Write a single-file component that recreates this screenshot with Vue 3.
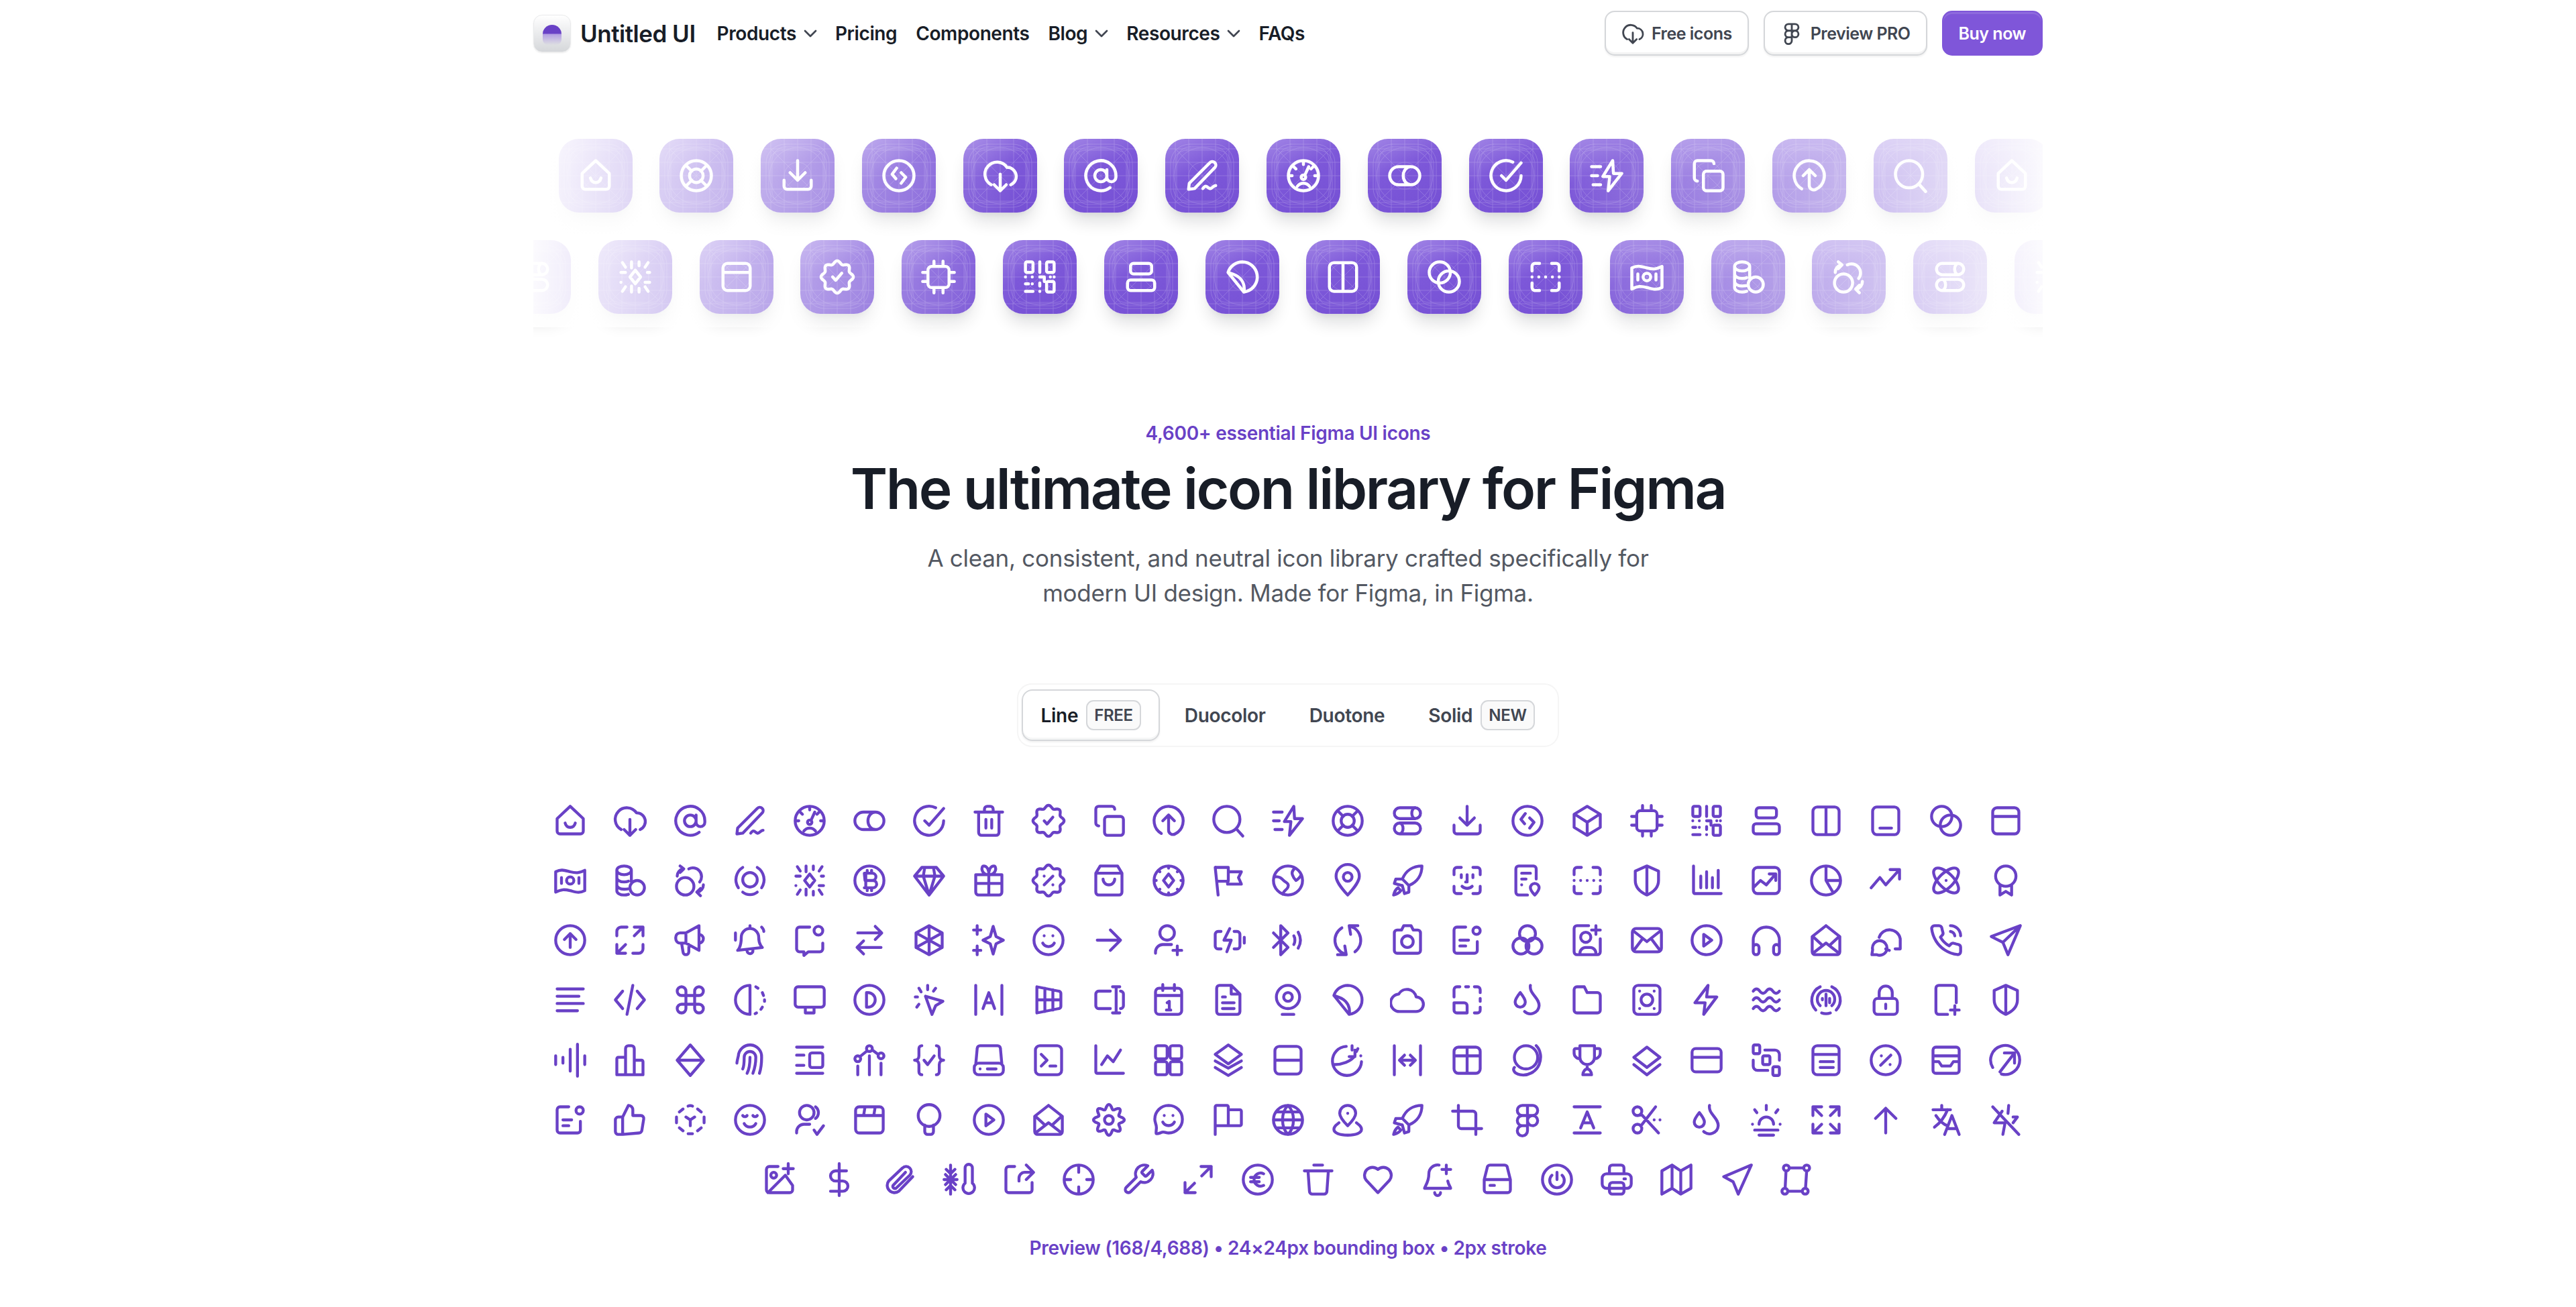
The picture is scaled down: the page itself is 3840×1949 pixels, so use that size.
<script setup>
const c = (x, y, r) => `M${x - r} ${y}a${r} ${r} 0 1 0 ${2 * r} 0a${r} ${r} 0 1 0 ${-2 * r} 0Z`
const rr = (x, y, w, h, r) =>
  `M${x + r} ${y}h${w - 2 * r}a${r} ${r} 0 0 1 ${r} ${r}v${h - 2 * r}a${r} ${r} 0 0 1 ${-r} ${r}h${-(w - 2 * r)}a${r} ${r} 0 0 1 ${-r} ${-r}v${-(h - 2 * r)}a${r} ${r} 0 0 1 ${r} ${-r}Z`
// scalloped outline for the badge and gear icons
const wavy = (R, amp, n) => {
  let d = ''
  for (let i = 0; i < 96; i++) {
    const t = (i / 96) * Math.PI * 2
    const r = R + amp * Math.cos(n * t)
    d += `${i ? 'L' : 'M'}${(12 + r * Math.sin(t)).toFixed(2)} ${(12 - r * Math.cos(t)).toFixed(2)}`
  }
  return d + 'Z'
}
const corners = 'M3 8V5a2 2 0 0 1 2-2h3M16 3h3a2 2 0 0 1 2 2v3M3 16v3a2 2 0 0 0 2 2h3M16 21h3a2 2 0 0 0 2-2v-3'

const i = {
  home: 'M3 10.5 12 2l9 8.5V19a2 2 0 0 1-2 2H5a2 2 0 0 1-2-2ZM8.5 13.5c.5 2 1.8 3 3.5 3s3-1 3.5-3',
  cloudDown: 'M6 18A8 8 0 1 1 16.500 6.500 6 6 0 0 1 19 18M12 11v11M8 18l4 4 4-4',
  at: 'M16 12a4 4 0 1 1-8 0 4 4 0 0 1 8 0ZM16 8v5a3 3 0 0 0 6 0v-1a10 10 0 1 0-3.9 7.9',
  signature: 'M3 21l.5-4L17 3.5a2.1 2.1 0 0 1 3.5 3L7 20.5ZM12.5 20.5c1-1.5 2-2 3-1s2 1.5 3 .5 1.700-1.500 2.500-1.500',
  speedo: c(12, 12, 10) + c(12, 13, 1.5) + 'M13 11.500 15.500 6M2.500 12h2M19.500 12h2M5.500 6 7 7.500M18.500 6 17 7.500M12 2v2.500M8 19c1-1.300 2.400-2 4-2s3 .7 4 2',
  toggle: rr(2, 6, 20, 12, 6) + 'M16 6a5 6 0 0 0 0 12',
  checkCircle: 'M16.500 3A10 10 0 1 0 22 12M22 3.500 12 15l-3-3',
  trash: 'M2.500 6h19M9 6V4a2 2 0 0 1 2-2h2a2 2 0 0 1 2 2v2M5 6v14a2 2 0 0 0 2 2h10a2 2 0 0 0 2-2V6M10 11v6M14 11v6',
  badge: wavy(9.7, 1, 8) + 'M9 12l2 2.200 4-4.700',
  copy: 'M5 15.500a2 2 0 0 1-2-2V4a2 2 0 0 1 2-2h9a2 2 0 0 1 2 2' + rr(9, 9, 13, 13, 2),
  upOpen: 'M7 20.700a10 10 0 1 1 9.500.3 3 3 0 0 1-4.500-2.500V8M8 12l4-4 4 4',
  search: c(11, 11, 9) + 'M22 22.500l-4.500-5',
  zapFast: 'M2 6h6M2 12h4M3 18h5M16 2 9.500 12.500H14L13 22l9-11.500h-5.500Z',
  lifebuoy: c(12, 12, 10) + c(12, 12, 4.5) + 'M5 5l4 4M15 9l4-4M15 15l4 4M9 15l-4 4',
  toggles: rr(3, 3, 18, 7.5, 3.75) + 'M17.500 3a2.500 3.750 0 0 0 0 7.500' + rr(3, 13.5, 18, 7.5, 3.75) + 'M6.500 13.500a2.500 3.750 0 0 1 0 7.500',
  download: 'M21 15v4a2 2 0 0 1-2 2H5a2 2 0 0 1-2-2v-4M7 10l5 5 5-5M12 15V2',
  codeCircle: c(12, 12, 10) + 'M10.500 7 7.500 11l2.500 3M13.500 10l3 3-3 4',
  box: 'M12 2l9 5.500v9L12 22l-9-5.500v-9ZM3.500 7.500 12 13l8.500-5.500M12 13v9',
  cpu: rr(5, 5, 14, 14, 2.5) + 'M9 1.500V5M15 1.500V5M9 19v3.500M15 19v3.500M1.500 9H5M1.500 15H5M19 9h3.500M19 15h3.500',
  qr: rr(2.5, 2, 5, 7, 1) + rr(16.5, 2, 5, 7, 1) + 'M12 2v7M2.500 12h.01M7 12h.01M12 12h3v3M12 16v2M19 12h.01M21.500 12h.01M2.500 16.500h2M7 16.500h.01M2.500 21.500h5M12 21.500h.01' + rr(16.5, 15, 5, 7, 1),
  rows: rr(5, 3, 14, 7, 2) + rr(3, 14, 18, 7, 2),
  columns: rr(3, 2.5, 18, 19, 3) + 'M12 2.500v19',
  tablet: rr(3, 2.5, 18, 19, 3) + 'M8 17h8',
  overlap: c(9, 9, 7) + c(15, 15, 7),
  layoutTop: rr(3, 3, 18, 18, 3) + 'M3 9h18',
  banknote: 'M2 6c4-2 6-1 10 0s6 1 10-1v14c-4 2-6 1-10 0s-6-1-10 1Z' + c(12, 12, 2.5) + 'M6 10v4M18 10v4',
  coins: 'M3 5c0-1.700 2.200-3 5-3s5 1.300 5 3-2.200 3-5 3-5-1.300-5-3ZM3 5v14c0 1.700 2.200 3 5 3 1 0 2-.2 3-.5M13 5v8M3 10c0 1.700 2.200 3 5 3 1 0 2-.1 3-.5M3 15c0 1.700 2.200 3 5 3 1 0 1.500 0 2.500-.2' + c(17, 17, 5),
  coinSwap: c(8.5, 16, 6) + 'M11 4a6 6 0 0 1 7.500 9M3 9a5 5 0 0 1 4-5M5 2l2.500 2L5 6.500M21 15a5 5 0 0 1-4 5M19 22.500 16.500 20l2.500-2.500',
  target: c(12, 11.5, 5) + 'M7 3a10 10 0 0 0-3 14M17 3a10 10 0 0 1 3 14M7 20a8 8 0 0 0 10 0',
  spark: 'M12 7.500l3.500 4.500-3.500 4.500L8.500 12ZM3.500 2.500 5.500 5.500M9.500 2v4M14.500 2v2.500M20.500 2.500 18.500 5.500M2.500 9h3M20 9h1.500M2.500 15.500h.01M18.500 15.500h3M3.500 21.500l2-3M9.500 18v4M14.500 19.500V22M20.500 21.500l-2-3',
  bitcoin: c(12, 12, 10) + 'M8.500 7H14a2.500 2.500 0 0 1 0 5H9ZM9 12h5.500a2.500 2.500 0 0 1 0 5h-6M9.500 7v10M10.500 5v2M13.500 5v2M10.500 17v2M13.500 17v2',
  diamond: 'M7 3h10l5 6-10 13L2 9ZM2 9h20M9 3 8 9l4 13 4-13-1-6',
  gift: 'M3 8h18v12a2 2 0 0 1-2 2H5a2 2 0 0 1-2-2ZM3 14h18M12 8v14M12 8C12 4 10.500 2 8.500 2S6.500 8 12 8ZM12 8c0-4 1.500-6 3.500-6S17.500 8 12 8Z',
  percentBadge: wavy(9.7, 1, 8) + 'M9 9h.01M15 15h.01M15 9l-6 6',
  bag: 'M6 2h12l3 5v13a2 2 0 0 1-2 2H5a2 2 0 0 1-2-2V7ZM3 7h18M8 11a4 4 0 0 0 8 0',
  compass: c(12, 12, 10) + 'M12 7.500l3.500 4.500-3.500 4.500L8.500 12ZM12 2v1.500M12 20.500V22M2 12h1.500M20.500 12H22M5 5l1 1M19 5l-1 1M5 19l1-1M19 19l-1-1',
  flagWave: 'M3 3l2 19M3.500 3H12v9.500H4.500M12 6h9l-2 4 2 4.500H11.500v-2',
  earth: c(12, 12, 10) + 'M3 9.500c3-.5 4.500 1 6 2.500s4 2 3 4.500-3 2-3.500 5M17 3.500c-2 1.500-2.500 3-2 4.500s1.500 3 2.500 4c1.500-1 3-2.500 3.500-4',
  pin: 'M12 22c5-5.500 8-9.500 8-13A8 8 0 0 0 4 9c0 3.500 3 7.500 8 13Z' + c(12, 9.5, 3),
  rocket: 'M22 2c-6 0-11 3-13.500 9l4.500 4.500C19 13 22 8 22 2ZM8.500 11H4l-1 3 5.500 1.500M13 15.500V20l-3 1-1.500-5.500M5.500 17c-1.500 1-2.500 3-3 5 2-.5 4-1.500 5-3Z',
  faceId: corners + 'M8 8v2M16 8v2M12 8v5h-1M8.500 16a5 5 0 0 0 7 0',
  receipt: 'M12 22H6a2 2 0 0 1-2-2V4a2 2 0 0 1 2-2h10a2 2 0 0 1 2 2v7M8 7h6M8 11h3M8 15h.01M17 22c2-2 3-3.500 3-5a3 3 0 0 0-6 0c0 1.500 1 3 3 5Z',
  scan: corners + 'M3 12h.01M7.500 12h.01M12 12h.01M16.500 12h.01M21 12h.01',
  shield: 'M12 2l8 3.500V12c0 5-3.500 8-8 10-4.500-2-8-5-8-10V5.500ZM12 2v20',
  barLines: 'M3 2v18a1 1 0 0 0 1 1h18M8 9v8M12 6v11M16 10v7M20 5v12',
  chartSquare: rr(3, 3, 18, 18, 3) + 'M3 17l5-5 4 3 6-7M14 7.500h4.500V12',
  pie: c(12, 12, 10) + 'M12 2v10h10M12 12l5 8.500',
  trend: 'M2 17l6-7 4 5 9-10M15 4.500h6.500V11',
  atom: 'M19.800 19.800A11 5 45 1 1 4.200 4.200A11 5 45 1 1 19.800 19.800ZM4.200 19.800A11 5 -45 1 1 19.800 4.200A11 5 -45 1 1 4.200 19.800ZM12 12h.01',
  medal: c(12, 9, 7) + 'M8 15v7l4-2.500 4 2.500v-7',
  upCircle: c(12, 12, 10) + 'M12 17V7.500M8 11.500l4-4 4 4',
  expand: 'M15 3h6v6M21 3l-6 6M9 21H3v-6M3 21l6-6M10 3H6a3 3 0 0 0-3 3v3M14 21h4a3 3 0 0 0 3-3v-3',
  megaphone: 'M18 2 9 7H5a3 3 0 0 0-3 3v1a3 3 0 0 0 3 3h4l9 5ZM9 7v7M18 8a3 3 0 0 1 0 6M6 14l1 6a2 2 0 0 0 4 0v-5',
  bellRing: 'M6 10a6 6 0 0 1 12 0c0 5 2.500 7 2.500 7l-17 2s2.500-2 2.500-9ZM12 4V2M10 19.500a2 2 0 0 0 4-.5M2 7v5M20 3c1 1 1.500 2 1.500 3',
  msgDot: 'M12 3H5a2 2 0 0 0-2 2v13a2 2 0 0 0 2 2h3v2.500L11 20h8a2 2 0 0 0 2-2v-4' + c(18, 5.5, 3),
  swap: 'M4 7h16M16 2.500 20.500 7 16 11.500M20 17H4M8 12.500 3.500 17 8 21.500',
  hexWeb: 'M12 2l9 5v10l-9 5-9-5V7ZM12 2v20M3 7l18 10M21 7 3 17',
  sparkles: 'M15 2.500l2 7 5 2.500-5 2.500-2 7-2-7-5-2.500 5-2.500ZM4 2v6M1.500 5h5M4 16v6M1.500 19h5',
  smile: c(12, 12, 10) + 'M8 14a4.500 4.500 0 0 0 8 0M9 9h.01M15 9h.01',
  right: 'M4 12h16M13 5l7 7-7 7',
  userPlus: c(11, 7, 5) + 'M3 21v-1a5 5 0 0 1 5-5h6M18 16v6M15 19h6',
  battery: 'M7 6H5a2 2 0 0 0-2 2v8a2 2 0 0 0 2 2h2M16 6h2a2 2 0 0 1 2 2v8a2 2 0 0 1-2 2h-2M13 4 9 12h5l-3 8M23 10v4',
  bluetooth: 'M2 7l10 10-5 5V2l5 5L2 17M16 9c1 1.500 1 4.500 0 6M19 6.500c2 3.500 2 7.500 0 11',
  refresh: 'M17 20a10 10 0 0 0-3-17.500M8 3.500A10 10 0 0 0 10 21.500M14 8l-1-6h6M10 16l1 6H5',
  camera: 'M8 5l1.500-3h5L16 5h3a2 2 0 0 1 2 2v12a2 2 0 0 1-2 2H5a2 2 0 0 1-2-2V7a2 2 0 0 1 2-2Z' + c(12, 13, 4),
  notif: 'M11 3H5a2 2 0 0 0-2 2v14a2 2 0 0 0 2 2h12a2 2 0 0 0 2-2v-6M7 12h6M7 16h4' + c(18.5, 5.5, 2.5),
  circles: c(12, 7.5, 5.5) + c(7.5, 16, 5.5) + c(16.5, 16, 5.5),
  userSquare: 'M13 2H5a2 2 0 0 0-2 2v16a2 2 0 0 0 2 2h14a2 2 0 0 0 2-2V11M18 2v6M15 5h6M7 22v-1a4 4 0 0 1 4-4h3a4 4 0 0 1 4 4v1' + c(11, 10, 3.5),
  mail: rr(2, 4, 20, 16, 2.5) + 'M2.500 5.500 12 13l9.500-7.500M3 19l6-8M21 19l-6-8',
  play: c(12, 12, 10) + 'M10 8l5.500 4-5.500 4Z',
  headphones: 'M3 18v-6a9 9 0 0 1 18 0v6' + rr(3, 15, 4, 7, 2) + rr(17, 15, 4, 7, 2),
  mailOpen: 'M12 2l9.500 7.500V20a2 2 0 0 1-2 2h-15a2 2 0 0 1-2-2V9.500ZM3 9.500l6.500 6M21 9.500l-6.500 6M3 21l9-7 9 7',
  chats: 'M7.500 10a7.500 7.500 0 0 1 14.500 1v7h-3.500M12 18l2.500 1M2.500 22l.5-3.500a5 5 0 1 1 3 3.500Z',
  phone: 'M22 16.900v3a2 2 0 0 1-2.200 2 19.800 19.800 0 0 1-8.600-3.100 19.500 19.500 0 0 1-6-6A19.800 19.800 0 0 1 2.100 4.200 2 2 0 0 1 4.100 2h3a2 2 0 0 1 2 1.700c.1 1 .4 1.900.7 2.800a2 2 0 0 1-.5 2.100L8.100 9.900a16 16 0 0 0 6 6l1.300-1.300a2 2 0 0 1 2.100-.4c.9.3 1.800.6 2.800.7a2 2 0 0 1 1.700 2ZM15 2a7 7 0 0 1 7 7M15 6a3.500 3.500 0 0 1 3 3',
  send: 'M22 2 2 9.500l8 4 3.500 8.500ZM10 13.500 22 2',
  align: 'M3 4.500h18M3 9.500h15M3 14.500h18M3 19.500h14',
  code: 'M17 6l5 6-5 6M7 6l-5 6 5 6M14 2l-4 20',
  command: 'M15 6v12a3 3 0 1 0 3-3H6a3 3 0 1 0 3 3V6a3 3 0 1 0-3 3h12a3 3 0 1 0-3-3Z',
  contrast: 'M12 2a10 10 0 0 0 0 20M12 2v20M16 3l1.500 1M20.500 7l.8 2M22 12v1M20.500 17l-1 1.500M16.500 21l-1 .5',
  monitor: rr(2, 3, 20, 14, 2) + 'M9 17v4h6v-4',
  dCircle: c(12, 12, 10) + 'M10 7h1a5 5 0 0 1 0 10h-1Z',
  cursor: 'M9.500 9.500 14 22l2.500-6 5-3ZM6.500 6.500 5 4M11 5V2M15 6l1.500-2M4 10H2.500M5 15l-1.500 2',
  typeBars: 'M3 2v20M21 2v20M8 18l4-11 4 11M9.500 14h5',
  persp: 'M4 3l15 3a1.500 1.500 0 0 1 1.500 1.500v9A1.500 1.500 0 0 1 19 18L4 21ZM4 12h16.500M9.500 4v16M15 5v14',
  input: 'M13 6H5a2 2 0 0 0-2 2v8a2 2 0 0 0 2 2h8M17 3v18M14.500 3h5M14.500 21h5M20 6a2 2 0 0 1 2 2v8a2 2 0 0 1-2 2',
  calendar: rr(3, 4, 18, 18, 2.5) + 'M3 9h18M8 1.500v4M16 1.500v4M11 14l1.500-1v6M10.500 19h3',
  file: 'M14 2H6a2 2 0 0 0-2 2v16a2 2 0 0 0 2 2h12a2 2 0 0 0 2-2V8ZM14 2v6h6M8 10h2M8 14h8M8 18h8',
  webcam: c(12, 10, 8) + c(12, 10, 3) + 'M8 22h8',
  sticker: 'M12 2a10 10 0 0 1 3 19.500L13 22 2.500 9A10 10 0 0 1 12 2ZM2.500 9c1 .5 5 1 8 4s3 7 2.500 9',
  cloud: 'M7 20A6 6 0 0 1 6 8a6.500 6.500 0 0 1 12 2 5 5 0 0 1 0 10Z',
  resize: 'M3 10V5a2 2 0 0 1 2-2h2M11 3h2M17 3h2a2 2 0 0 1 2 2v2M21 11v2M21 17v2a2 2 0 0 1-2 2h-2M3 14h7a2 2 0 0 1 2 2v5H5a2 2 0 0 1-2-2Z',
  drops: 'M7 7c-2 2.500-3.500 4.500-3.500 6.500a3.500 3.500 0 0 0 7 0C10.500 11.500 9 9.500 7 7ZM14 2c-.5 3 1 5 3 7.500s3 4 3 6.500a6 6 0 0 1-10 4',
  folder: 'M3 5a2 2 0 0 1 2-2h5l2 4h7a2 2 0 0 1 2 2v10a2 2 0 0 1-2 2H5a2 2 0 0 1-2-2Z',
  speaker: rr(3, 2, 18, 20, 3) + c(12, 12, 4) + 'M7 6h.01M17 6h.01M7 18h.01M17 18h.01',
  zap: 'M13 2 4 14h7l-1 8 9-12h-7l1-8Z',
  waves: 'M3 6c1.500-2 3-2 4.500 0s3 2 4.500 0 3-2 4.500 0 3 2 4.500 0M3 12c1.500-2 3-2 4.500 0s3 2 4.500 0 3-2 4.500 0 3 2 4.500 0M3 18c1.500-2 3-2 4.500 0s3 2 4.500 0 3-2 4.500 0 3 2 4.500 0',
  fpCircle: 'M5 19a10 10 0 0 1 3-16M16 3a10 10 0 0 1 3 16M15 21a9 9 0 0 1-6 0M8 16a6 6 0 1 1 8 0M12 8v8M9.500 12v-1M14.500 11v3',
  lock: rr(4, 11, 16, 11, 2.5) + 'M7.500 11V7a4.500 4.500 0 0 1 9 0v4M12 15v3',
  filePlus: 'M13 22H7a2 2 0 0 1-2-2V4a2 2 0 0 1 2-2h10a2 2 0 0 1 2 2v10M18 16v6M15 19h6',
  wave: 'M2 9v6M7 10v4M12 4.500v15M17 1v22M22 9v6',
  bars: 'M9 22V4a2 2 0 0 1 2-2h2a2 2 0 0 1 2 2v18M9 10H4a1 1 0 0 0-1 1v11h18V13a1 1 0 0 0-1-1h-5',
  eth: 'M12 1.500 3 12l9 10.500L21 12ZM3 12h18',
  fingerprint: 'M3 14c0-1 .5-3 1-5a8 8 0 0 1 16 1c0 4-.5 8-1.500 11M7 18c1-2 1-5 1-8a4 4 0 0 1 8 0c0 4-.5 7-2 11M12 10c0 4-.5 8-2 11',
  layout: 'M3 3h18M3 21h18M3 8.500h5M3 15.500h5' + rr(12, 7, 9, 10, 1.5),
  nodes: c(4, 11, 2) + c(12, 4, 2) + c(20, 9, 2) + 'M5.500 9.500l5-4M14 5l4 3M4 16v6M12 9v13M20 14v8',
  braces: 'M7 2a2 2 0 0 0-2 2v5c0 1.500-1 3-3 3 2 0 3 1.500 3 3v5a2 2 0 0 0 2 2M17 2a2 2 0 0 1 2 2v5c0 1.500 1 3 3 3-2 0-3 1.500-3 3v5a2 2 0 0 1-2 2M8.500 12l2.500 3 4.500-6',
  drive: 'M3 15 4 4a2 2 0 0 1 2-2h12a2 2 0 0 1 2 2l1 11' + rr(2, 14, 20, 8, 3) + 'M6 18h.01M11 18h6',
  terminal: rr(3, 2, 18, 20, 3) + 'M7 8l4 4-4 4M13 16h4',
  lineChart: 'M3 2v18a1 1 0 0 0 1 1h18M7 15l4-6 4 4 5-8',
  grid: rr(3, 2, 8, 9, 1.5) + rr(13, 2, 8, 9, 1.5) + rr(3, 13, 8, 9, 1.5) + rr(13, 13, 8, 9, 1.5),
  layers3: 'M12 1.500 21 8l-9 6.500L3 8ZM3 12.500l9 5 9-5M3 17l9 5.500 9-5.500',
  splitRect: rr(3, 2.5, 18, 19, 3) + 'M3 12h18',
  gauge: 'M11 2.500A10 10 0 1 0 21.500 13M3 15c5 0 11-2 14-6M17 9V5M13 9.500h4M15 2v3M19 4l-1 2M21 9h.01',
  stretch: 'M3 2v20M21 2v20M7 12h10M10 8.500 6.500 12l3.500 3.500M14 8.500l3.500 3.500-3.500 3.500',
  tableRect: rr(3, 3, 18, 18, 3) + 'M3 9h18M12 3v18',
  ring: c(11, 10, 8) + 'M18 2c3 3 4 8 2 13s-8 8-13 7-5-4-4-5',
  trophy: 'M7 2h10v8a5 5 0 0 1-10 0ZM7 4H4a1 1 0 0 0-1 1v2a4 4 0 0 0 4 4M17 4h3a1 1 0 0 1 1 1v2a4 4 0 0 1-4 4M12 15v3M9 22c0-2 1.500-4 3-4s3 2 3 4Z',
  layers2: 'M12 3l9 7-9 7-9-7ZM3 15l9 7 9-7',
  card: rr(2, 4, 20, 16, 2.5) + 'M2 10h20',
  dataflow: rr(3, 1.5, 4.5, 6, 1) + rr(16.5, 16.5, 4.5, 6, 1) + rr(9.5, 9, 5, 6, 1) + 'M11 5h7a3 3 0 0 1 3 3v4M13 19H6a3 3 0 0 1-3-3v-4',
  listRect: rr(3, 2, 18, 20, 3) + 'M3 8h18M8 13h9M8 17h9',
  percent: c(12, 12, 10) + 'M9 9h.01M15 15h.01M15.500 8.500l-7 7',
  inbox: 'M3 5a2 2 0 0 1 2-2h14a2 2 0 0 1 2 2v14a2 2 0 0 1-2 2H5a2 2 0 0 1-2-2ZM3 9h18M3 13h4l2 3h6l2-3h4',
  upRight: 'M3 17A10 10 0 1 1 9 21.500M8 20 18 7M11 7h7v7',
  thumb: 'M7 22H4a2 2 0 0 1-2-2v-8a2 2 0 0 1 2-2h3M7 22V10l4-8a3 3 0 0 1 3 3v4h5.500a2 2 0 0 1 2 2.300l-1.300 8a2 2 0 0 1-2 1.700Z',
  dashCube: 'M10.500 2.500c1-.5 2-.5 3 0M17 4.500l2.500 2M21.500 10v4M19.500 17.500 17 19.500M13.500 21.500h-3M7 19.500l-2.500-2M2.500 14v-4M4.500 6.500 7 4.500M9 10l3 2 3-2M12 12v4',
  happy: c(12, 12, 10) + 'M7 9c.5 1 2.500 1 3 0M14 9c.5 1 2.500 1 3 0M8 14.500a4.500 4.500 0 0 0 8 0',
  userCheck: c(10, 7, 5) + 'M3 21v-1a5 5 0 0 1 5-5h4M16 3a5 5 0 0 1 0 8M15 19l2 3 4.500-6',
  clapper: rr(2.5, 3, 19, 18, 2.5) + 'M2.500 9h19M9 3 8 9M16 3l-1 6',
  bulb: c(12, 9, 7.5) + 'M9 15.500V20a2 2 0 0 0 2 2h2a2 2 0 0 0 2-2v-4.500',
  gear: wavy(9, 1.6, 8) + c(12, 12, 3),
  chatSmile: 'M12 2a9.500 9.500 0 0 1 0 19c-1.500 0-3-1-4.500-.5S4 22 3.500 21.500 4 18 3.500 16 2.500 13 2.500 11.500A9.500 9.500 0 0 1 12 2ZM9 9h.01M15 9h.01M8 13.500a4.500 4.500 0 0 0 8 0',
  flag: 'M3 22V3a1 1 0 0 1 1-1h7a1 1 0 0 1 1 1v13H3M12 5h8a1 1 0 0 1 1 1v9a1 1 0 0 1-1 1h-8',
  globe: c(12, 12, 10) + 'M2 12h20M12 2c-5 5-5 15 0 20 5-5 5-15 0-20ZM4 6.500h16M4 17.500h16',
  pinRing: 'M12 16c3.500-3.500 5.500-6 5.500-8.500a5.500 5.500 0 0 0-11 0c0 2.500 2 5 5.500 8.500ZM12 7.500h.01M6 14c-2 1.500-3.500 2.500-3.500 4.500 0 2.500 4 4 9.500 4s9.500-1.500 9.500-4c0-2-1.500-3-3.500-4.500',
  crop: 'M2 6h14a2 2 0 0 1 2 2v14M6 2v14a2 2 0 0 0 2 2h14',
  figma: 'M12 2H8.500a3.500 3.500 0 0 0 0 7H12ZM12 2h3.500a3.500 3.500 0 0 1 0 7H12ZM12 9H8.500a3.500 3.500 0 0 0 0 7H12ZM12 16H8.500a3.500 3.500 0 1 0 3.500 3.500Z' + c(15.5, 12.5, 3.5),
  typeLines: 'M3 3h18M3 21h18M7.500 17.500 12 6.500l4.500 11M9 14h6',
  scissors: c(5.5, 6, 3) + c(5.5, 18, 3) + 'M8 8 20 21M8 16 18 3M17 12h.01M21 12h.01',
  sunrise: 'M12 2v3M5.500 7 4 5M18.500 7 20 5M7 15a5 5 0 0 1 10 0M2.500 15h.01M21.500 15h.01M4 19h16M7 22.500h10',
  expand4: 'M3 9V3h6M3 3l6 6M15 3h6v6M21 3l-6 6M3 15v6h6M3 21l6-6M21 15v6h-6M21 21l-6-6',
  up: 'M12 21V4M5 11l7-7 7 7',
  translate: 'M3 5h12M9 2v3M13 5c-2 5-5 9-9 12M5 9c2 3 5 6 8 7M11 22l5-13 5 13M12.500 18h7',
  zapOff: 'M3 3l18 19M14 2l-.5 5.500M9.500 6 4 14h7M17 10h3l-3 4M10 22l1.500-8',
  imagePlus: 'M11 3H5a2 2 0 0 0-2 2v14a2 2 0 0 0 2 2h14a2 2 0 0 0 2-2v-3l-5-7L4 21M18 1v7M14.500 4.500h7' + c(8, 9, 2),
  dollar: 'M12 1v22M17 6H9.500a3.500 3.500 0 0 0 0 7h5a3.500 3.500 0 0 1 0 7H6',
  clip: 'M21 10l-9.500 10a5 5 0 0 1-7-7L14 4a3.500 3.500 0 0 1 5 5L9.500 18a1.500 1.500 0 0 1-2-2l8.500-9',
  thermo: 'M16 14.500V4a2.500 2.500 0 0 1 5 0v10.500a4 4 0 1 1-5 0ZM6 2v20M1.500 12h9M3 5l3 3 3-3M3 19l3-3 3 3M2.500 8.500l7 7M9.500 8.500l-7 7',
  share: 'M9 3H5a2 2 0 0 0-2 2v14a2 2 0 0 0 2 2h14a2 2 0 0 0 2-2v-5M21 7h-5a4 4 0 0 0-4 4v2M17 2l5 5-5 5',
  crosshair: c(12, 12, 10) + 'M12 2v5M12 17v5M2 12h4.500M17.500 12H22',
  wrench: 'M14.700 6.300a1 1 0 0 0 0 1.400l1.600 1.600a1 1 0 0 0 1.400 0l3.770-3.770a6 6 0 0 1-7.940 7.940l-6.910 6.910a2.120 2.120 0 0 1-3-3l6.910-6.910a6 6 0 0 1 7.940-7.940l-3.760 3.760Z',
  diag: 'M14 3h7v7M21 3l-6.500 6.500M10 21H3v-7M3 21l6.500-6.500',
  euro: c(12, 12, 10) + 'M16 8a4.500 4.500 0 1 0 0 8M7 10.500h6M7 13.500h6',
  cup: 'M2.500 6h19M9 2h6M5 6l1 14a2 2 0 0 0 2 2h8a2 2 0 0 0 2-2l1-14',
  heart: 'M12 21 4 12.500a5.500 5.500 0 0 1 8-7.500 5.500 5.500 0 0 1 8 7.500Z',
  bellPlus: 'M13 2a6 6 0 0 0-7 6c0 6-3 9-3 10h18c0-1-1.500-2-2-5M18 2v6M15 5h6M10 21a2 2 0 0 0 4 0',
  drive2: 'M3 12l2-8a2 2 0 0 1 2-2h10a2 2 0 0 1 2 2l2 8v7a2 2 0 0 1-2 2H5a2 2 0 0 1-2-2ZM3 12h18M7 16h3',
  power: c(12, 12, 10) + 'M12 7v5M8.500 9a5 5 0 1 0 7 0',
  printer: 'M7 8V4a2 2 0 0 1 2-2h6a2 2 0 0 1 2 2v4' + rr(2, 8, 20, 10, 3) + rr(7, 14, 10, 8, 2) + 'M17 11.500h1',
  map: 'M2 6l7-4 6 4 7-4v16l-7 4-6-4-7 4ZM9 2v16M15 6v16',
  nav: 'M22 2 3 10l6.500 3.500L13 22Z',
  vector: c(5, 4, 2) + c(19, 4, 2) + c(4, 20, 2) + c(18, 20, 2) + 'M7 4h10M6 20h10M4.800 6 4.200 18M19 6l-.8 12'
}

const row1 = ['home', 'lifebuoy', 'download', 'codeCircle', 'cloudDown', 'at', 'signature', 'speedo', 'toggle', 'checkCircle', 'zapFast', 'copy', 'upOpen', 'search', 'home']
const row2 = ['toggles', 'spark', 'layoutTop', 'badge', 'cpu', 'qr', 'rows', 'sticker', 'columns', 'overlap', 'scan', 'banknote', 'coins', 'coinSwap', 'toggles', 'spark']

const gridIcons = [
  'home', 'cloudDown', 'at', 'signature', 'speedo', 'toggle', 'checkCircle', 'trash', 'badge', 'copy', 'upOpen', 'search', 'zapFast', 'lifebuoy', 'toggles', 'download', 'codeCircle', 'box', 'cpu', 'qr', 'rows', 'columns', 'tablet', 'overlap', 'layoutTop',
  'banknote', 'coins', 'coinSwap', 'target', 'spark', 'bitcoin', 'diamond', 'gift', 'percentBadge', 'bag', 'compass', 'flagWave', 'earth', 'pin', 'rocket', 'faceId', 'receipt', 'scan', 'shield', 'barLines', 'chartSquare', 'pie', 'trend', 'atom', 'medal',
  'upCircle', 'expand', 'megaphone', 'bellRing', 'msgDot', 'swap', 'hexWeb', 'sparkles', 'smile', 'right', 'userPlus', 'battery', 'bluetooth', 'refresh', 'camera', 'notif', 'circles', 'userSquare', 'mail', 'play', 'headphones', 'mailOpen', 'chats', 'phone', 'send',
  'align', 'code', 'command', 'contrast', 'monitor', 'dCircle', 'cursor', 'typeBars', 'persp', 'input', 'calendar', 'file', 'webcam', 'sticker', 'cloud', 'resize', 'drops', 'folder', 'speaker', 'zap', 'waves', 'fpCircle', 'lock', 'filePlus', 'shield',
  'wave', 'bars', 'eth', 'fingerprint', 'layout', 'nodes', 'braces', 'drive', 'terminal', 'lineChart', 'grid', 'layers3', 'splitRect', 'gauge', 'stretch', 'tableRect', 'ring', 'trophy', 'layers2', 'card', 'dataflow', 'listRect', 'percent', 'inbox', 'upRight',
  'notif', 'thumb', 'dashCube', 'happy', 'userCheck', 'clapper', 'bulb', 'play', 'mailOpen', 'gear', 'chatSmile', 'flag', 'globe', 'pinRing', 'rocket', 'crop', 'figma', 'typeLines', 'scissors', 'drops', 'sunrise', 'expand4', 'up', 'translate', 'zapOff',
  'imagePlus', 'dollar', 'clip', 'thermo', 'share', 'crosshair', 'wrench', 'diag', 'euro', 'cup', 'heart', 'bellPlus', 'drive2', 'power', 'printer', 'map', 'nav', 'vector'
]

const keylines =
  'M15 0v110M35 0v110M55 0v110M75 0v110M95 0v110M0 15h110M0 35h110M0 55h110M0 75h110M0 95h110M15 15l80 80M95 15l-80 80' +
  rr(12, 17, 86, 76, 20) + rr(17, 12, 76, 86, 20) + rr(8, 8, 94, 94, 28) + c(55, 55, 42) + c(55, 55, 20)

const navLinks = [
  { label: 'Products', menu: true },
  { label: 'Pricing' },
  { label: 'Components' },
  { label: 'Blog', menu: true },
  { label: 'Resources', menu: true },
  { label: 'FAQs' }
]
const chevron = 'M6 9l6 6 6-6'
</script>

<template>
  <div class="page">
    <header class="topbar">
      <div class="brand">
        <div class="logo"><span class="logo-dot"></span></div>
        <span class="brand-name">Untitled UI</span>
      </div>
      <nav class="nav">
        <a v-for="l in navLinks" :key="l.label" class="nav-link">
          {{ l.label }}
          <svg v-if="l.menu" class="chev" viewBox="0 0 24 24"><path :d="chevron" /></svg>
        </a>
      </nav>
      <div class="actions">
        <button class="btn"><svg class="btn-ic" viewBox="0 0 24 24"><path :d="i.cloudDown" /></svg>Free icons</button>
        <button class="btn"><svg class="btn-ic" viewBox="0 0 24 24"><path :d="i.figma" /></svg>Preview PRO</button>
        <button class="btn primary">Buy now</button>
      </div>
    </header>

    <section class="marquee">
      <div class="tile-row first">
        <div v-for="(n, idx) in row1" :key="idx" class="tile">
          <svg class="keylines" viewBox="0 0 110 110"><path :d="keylines" /></svg>
          <svg class="tile-ic" viewBox="0 0 24 24"><path :d="i[n]" /></svg>
        </div>
      </div>
      <div class="tile-row second">
        <div v-for="(n, idx) in row2" :key="idx" class="tile">
          <svg class="keylines" viewBox="0 0 110 110"><path :d="keylines" /></svg>
          <svg class="tile-ic" viewBox="0 0 24 24"><path :d="i[n]" /></svg>
        </div>
      </div>
      <div class="fade left"></div>
      <div class="fade right"></div>
    </section>

    <section class="hero">
      <p class="eyebrow">4,600+ essential Figma UI icons</p>
      <h1>The ultimate icon library for Figma</h1>
      <p class="lead">A clean, consistent, and neutral icon library crafted specifically for<br />modern UI design. Made for Figma, in Figma.</p>
    </section>

    <div class="tabs">
      <div class="tab active">Line <span class="tag">FREE</span></div>
      <div class="tab">Duocolor</div>
      <div class="tab">Duotone</div>
      <div class="tab">Solid <span class="tag">NEW</span></div>
    </div>

    <div class="icon-grid">
      <svg v-for="(n, idx) in gridIcons" :key="idx" class="grid-ic" viewBox="0 0 24 24"><path :d="i[n]" /></svg>
    </div>

    <p class="note">Preview (168/4,688) • 24×24px bounding box • 2px stroke</p>
  </div>
</template>

<style scoped>
.page {
  width: 3840px;
  height: 1949px;
  overflow: hidden;
  background: #fff;
  font-family: Inter, "Liberation Sans", sans-serif;
  color: #181d27;
}
svg path {
  fill: none;
  stroke: currentColor;
  stroke-width: 2;
  stroke-linecap: round;
  stroke-linejoin: round;
}

.topbar {
  width: 2250px;
  height: 99px;
  margin: 0 auto;
  display: flex;
  align-items: center;
}
.brand {
  display: flex;
  align-items: center;
  gap: 14px;
}
.logo {
  width: 56px;
  height: 56px;
  border-radius: 13px;
  border: 1px solid #e9eaeb;
  background: linear-gradient(#ffffff, #d5d7da);
  box-shadow: 0 1px 2px rgba(10, 13, 18, 0.08);
  display: flex;
  justify-content: center;
  padding-top: 14px;
  box-sizing: border-box;
}
.logo-dot {
  width: 28px;
  height: 30px;
  border-radius: 14px 14px 8px 8px;
  background: linear-gradient(#6941c6 42%, rgba(127, 86, 217, 0.5) 48%, rgba(127, 86, 217, 0) 100%);
}
.brand-name {
  font-size: 35px;
  font-weight: 600;
  letter-spacing: -0.5px;
}
.nav {
  display: flex;
  align-items: center;
  gap: 28px;
  margin-left: 32px;
}
.nav-link {
  display: flex;
  align-items: center;
  gap: 5px;
  font-size: 28px;
  font-weight: 600;
  letter-spacing: -0.4px;
}
.chev {
  width: 32px;
  height: 32px;
  margin-right: -7px;
  color: #414651;
}
.actions {
  margin-left: auto;
  display: flex;
  gap: 22px;
}
.btn {
  height: 67px;
  box-sizing: border-box;
  padding: 0 23px;
  display: flex;
  align-items: center;
  gap: 11px;
  border: 2px solid #d5d7da;
  border-radius: 15px;
  background: #fff;
  color: #414651;
  font-family: inherit;
  font-size: 25px;
  font-weight: 600;
  letter-spacing: -0.5px;
  box-shadow: 0 2px 3px rgba(10, 13, 18, 0.06), inset 0 -3px 0 rgba(10, 13, 18, 0.05);
}
.btn-ic {
  width: 34px;
  height: 34px;
}
.primary {
  background: #7f56d9;
  color: #fff;
  border-color: #7f56d9;
  box-shadow: inset 0 3px 0 rgba(255, 255, 255, 0.12);
}

.marquee {
  position: relative;
  width: 2250px;
  height: 320px;
  margin: 91px auto 0;
  padding-top: 17px;
  box-sizing: border-box;
  overflow: hidden;
}
.tile-row {
  display: flex;
  gap: 40.8px;
  margin-bottom: 41px;
}
.first {
  margin-left: 37.5px;
}
.second {
  margin-left: -54px;
}
.tile {
  position: relative;
  flex: none;
  width: 110px;
  height: 110px;
  border-radius: 30px;
  color: #fff;
  display: flex;
  align-items: center;
  justify-content: center;
  background: linear-gradient(155deg, #a286e6 0%, #7d58d9 42%, #7550d4 100%);
  box-shadow: 0 18px 26px -6px rgba(10, 13, 18, 0.14), 0 6px 10px -4px rgba(10, 13, 18, 0.06);
}
.keylines {
  position: absolute;
  inset: 0;
  opacity: 0.26;
}
.keylines path {
  stroke-width: 0.7;
}
.tile-ic {
  position: relative;
  width: 54px;
  height: 54px;
}
.fade {
  position: absolute;
  top: 0;
  height: 298px;
  width: 720px;
}
.left {
  left: 0;
  background: linear-gradient(90deg, rgba(255, 255, 255, 0.97) 0%, rgba(255, 255, 255, 0) 100%);
}
.right {
  right: 0;
  background: linear-gradient(270deg, rgba(255, 255, 255, 0.97) 0%, rgba(255, 255, 255, 0) 100%);
}

.hero {
  margin-top: 118px;
  text-align: center;
}
.eyebrow {
  margin: 0;
  font-size: 28px;
  line-height: 36px;
  font-weight: 600;
  letter-spacing: -0.28px;
  color: #6941c6;
}
h1 {
  margin: 13px 0 0;
  font-size: 84px;
  line-height: 104px;
  font-weight: 600;
  letter-spacing: -2.4px;
}
.lead {
  margin: 25px 0 0;
  font-size: 35px;
  line-height: 52px;
  font-weight: 400;
  letter-spacing: -0.28px;
  color: #535862;
}

.tabs {
  width: 808px;
  height: 95px;
  box-sizing: border-box;
  margin: 109px auto 0;
  padding: 7px 5px;
  display: flex;
  gap: 8px;
  border: 2px solid #f5f5f5;
  border-radius: 22px;
}
.tab {
  display: flex;
  align-items: center;
  gap: 12px;
  padding: 0 26.5px;
  font-size: 28px;
  font-weight: 600;
  letter-spacing: -0.3px;
  color: #414651;
  border-radius: 16px;
  border: 2px solid transparent;
}
.active {
  color: #181d27;
  border-color: #d5d7da;
  box-shadow: 0 2px 3px rgba(10, 13, 18, 0.06), inset 0 -3px 0 rgba(10, 13, 18, 0.04);
}
.tag {
  height: 45px;
  box-sizing: border-box;
  padding: 0 10px;
  display: flex;
  align-items: center;
  font-size: 24px;
  letter-spacing: -0.3px;
  color: #414651;
  background: #fafafa;
  border: 2px solid #d5d7da;
  border-radius: 11px;
  font-weight: 600;
}

.icon-grid {
  width: 2195px;
  margin: 84px auto 0;
  display: flex;
  flex-wrap: wrap;
  justify-content: center;
  gap: 37.15px;
}
.grid-ic {
  width: 52px;
  height: 52px;
  color: #6941c6;
}
.note {
  margin: 58px 0 0;
  text-align: center;
  font-size: 28px;
  line-height: 36px;
  font-weight: 600;
  letter-spacing: -0.3px;
  color: #6941c6;
}
</style>
